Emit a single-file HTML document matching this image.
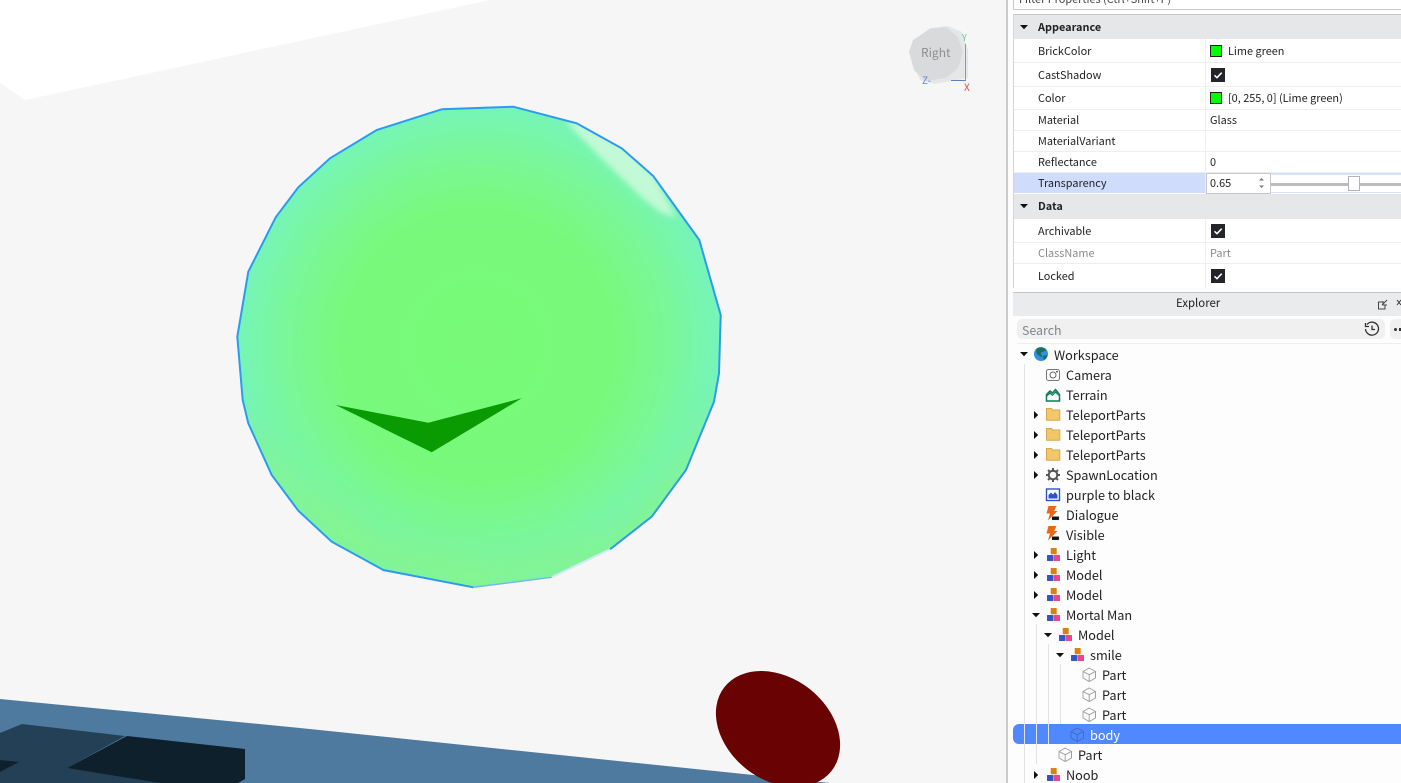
<!DOCTYPE html>
<html><head><meta charset="utf-8"><style>
html,body{margin:0;padding:0;width:1401px;height:783px;overflow:hidden;background:#fff}
body{position:relative;font-family:"Noto Sans CJK JP","Liberation Sans",sans-serif;color:#1e1e1e}
.a{position:absolute;white-space:nowrap}
.t{position:absolute;white-space:nowrap;font-size:10.9px;line-height:16px;color:#222}
.e{position:absolute;white-space:nowrap;font-size:12.7px;line-height:20px;color:#222}
.h{position:absolute;left:1014px;width:387px;background:#e6e7e8}
.l{position:absolute;left:1014px;width:387px;height:1px;background:#eeeeef}
.cb{position:absolute;left:1211px;width:14px;height:14px;background:#23252b}
.sw{position:absolute;left:1210px;width:10px;height:10px;background:#00ff00;border:1px solid #222}
svg.i{position:absolute;width:16px;height:16px;overflow:visible}
.g{position:absolute;width:1px;background:#e2e2e2}
</style></head><body>
<svg class="a" style="left:0;top:0" width="1007" height="783" viewBox="0 0 1007 783">
<defs>
<radialGradient id="gl" gradientUnits="userSpaceOnUse" cx="478" cy="345" r="245">
<stop offset="0" stop-color="#78fa78"/><stop offset=".55" stop-color="#79f97b"/><stop offset=".78" stop-color="#7af798"/><stop offset="1" stop-color="#76f4bc"/>
</radialGradient>
<clipPath id="cp"><polygon points="513.3,106.7 576.7,123.3 621.7,148.3 653.3,176 699.3,240 720.7,315 719,373.3 714,401.7 686,470 651.7,516.7 610,549.3 551.7,577.3 473.3,587.3 383.3,570 331.7,541.7 298.3,510.7 271.7,475 248.3,423.3 242.7,400 237.3,336.7 248.3,271.7 275.7,217.3 298.3,187.3 330,158.3 376.7,130 441.7,109.3"/></clipPath>
<filter id="bl" x="-30%" y="-30%" width="160%" height="160%"><feGaussianBlur stdDeviation="3"/></filter>
<filter id="bl2" x="-30%" y="-30%" width="160%" height="160%"><feGaussianBlur stdDeviation="14"/></filter>
</defs>
<rect width="1007" height="783" fill="#f6f6f6"/>
<polygon points="0,0 490,0 25,100 0,83" fill="#ffffff"/>
<polygon points="0,699 300,728 830,783 0,783" fill="#4d7a9e"/>
<polygon points="125,736 22,724 0,733 0,783 170,783 67,768" fill="#244057"/>
<polygon points="0,760 19,762 0,772" fill="#0f202c"/>
<polygon points="67,768 127,736 245,749 245,779 238,783 160,783" fill="#0e202b"/>
<ellipse cx="778" cy="729" rx="68" ry="51" transform="rotate(38 778 729)" fill="#680203"/>
<polygon points="513.3,106.7 576.7,123.3 621.7,148.3 653.3,176 699.3,240 720.7,315 719,373.3 714,401.7 686,470 651.7,516.7 610,549.3 551.7,577.3 473.3,587.3 383.3,570 331.7,541.7 298.3,510.7 271.7,475 248.3,423.3 242.7,400 237.3,336.7 248.3,271.7 275.7,217.3 298.3,187.3 330,158.3 376.7,130 441.7,109.3" fill="url(#gl)"/>
<g clip-path="url(#cp)">
<polygon points="640,560 473,600 340,560 260,480 240,410 300,480 390,540 500,560 620,530 690,450 720,400 720,480" fill="#88f488" opacity=".85" filter="url(#bl2)"/>
<polygon points="566,122 580,122 625,148 655,176 676,218 660,212 640,196 603,160" fill="#c2f9d6" filter="url(#bl)"/>
</g>
<polyline points="441.7,109.3 513.3,106.7 576.7,123.3 621.7,148.3 653.3,176 699.3,240 720.7,315 719,373.3 714,401.7 686,470 651.7,516.7 610,549.3" fill="none" stroke="#2b9af0" stroke-width="2"/>
<polyline points="610,549.3 551.7,577.3" fill="none" stroke="#d6e8f6" stroke-width="2"/>
<polyline points="551.7,577.3 473.3,587.3" fill="none" stroke="#6db9ef" stroke-width="1.4"/>
<polyline points="473.3,587.3 383.3,570 331.7,541.7 298.3,510.7 271.7,475 248.3,423.3 242.7,400 237.3,336.7 248.3,271.7 275.7,217.3 298.3,187.3 330,158.3 376.7,130 441.7,109.3" fill="none" stroke="#2b9af0" stroke-width="2"/>
<polygon points="335.7,405 428.3,422.7 521.7,398.3 431.7,452.3" fill="#0a9a02"/>
<polygon points="910,55 914,40 930,28 948,26 962,32 968,50 968,78 935,84 920,80" fill="#e4e6e7"/>
<polygon points="909,52 913,40 930,29 946,27 958,37 963,52 958,68 946,78 925,81 914,70" fill="#d9dadb"/>
<text x="921" y="57" font-size="12" fill="#8d8d8d" font-family="'Noto Sans CJK JP',sans-serif">Right</text>
<line x1="965.500" y1="44" x2="965.500" y2="80" stroke="#55c07a" stroke-width="1"/>
<line x1="951" y1="80.500" x2="966" y2="80.500" stroke="#5a80cc" stroke-width="1"/>
<text x="962" y="41" font-size="9" fill="#6ac88a" font-family="'Noto Sans CJK JP',sans-serif">Y</text>
<text x="922" y="84" font-size="10" fill="#5f86d4" font-family="'Noto Sans CJK JP',sans-serif">Z-</text>
<text x="964" y="91" font-size="10" fill="#dc5050" font-family="'Noto Sans CJK JP',sans-serif">X</text>
</svg>

<svg width="0" height="0" style="position:absolute"><defs>
<symbol id="model" viewBox="0 0 16 16"><rect x="4.700" y="1" width="6" height="6.300" rx=".5" fill="#d9820f"/><rect x="1" y="8" width="6.300" height="6" rx=".5" fill="#3455c4"/><rect x="7.700" y="8" width="6.300" height="6" rx=".5" fill="#ea4590"/></symbol>
<symbol id="part" viewBox="0 0 16 16"><path d="M8.200 1 14.500 4.500V11L8.200 14.500 2 11V4.500ZM2.200 4.600 8.200 7.700 14.300 4.600M8.200 7.700V14.300" fill="none" stroke="#a2a2a2" stroke-width="1"/></symbol>
<symbol id="folder" viewBox="0 0 16 16"><path d="M1.500 1.500H6.500L7.500 3H14.800V13.300H1.500Z" fill="#f0c86a" stroke="#d8a84a" stroke-width="1"/></symbol>
<symbol id="bolt" viewBox="0 0 16 16"><path d="M3.500 1H11.500L9 6H12.500L3 15.500 5 8.500H1.500Z" fill="#ee6410"/><rect x="6.700" y="11.300" width="7.500" height="3.900" rx=".6" fill="#111" stroke="#fff" stroke-width=".5"/></symbol>
<symbol id="arR" viewBox="0 0 8 8"><path d="M2 0 6.200 4 2 8Z" fill="#111"/></symbol>
<symbol id="arD" viewBox="0 0 8 8"><path d="M0 2H8L4 6.200Z" fill="#111"/></symbol>
<symbol id="chk" viewBox="0 0 14 14"><path d="M3.500 7.300 6 9.700 10.700 4.700" fill="none" stroke="#fff" stroke-width="1.500"/></symbol>
</defs></svg>

<!-- divider -->
<div class="a" style="left:1006px;top:0;width:2px;height:783px;background:#c9cbce"></div>
<div class="a" style="left:1008px;top:0;width:393px;height:783px;background:#fdfdfd"></div>

<!-- filter -->
<div class="a" style="left:1013px;top:-6px;width:388px;height:15px;background:#fff;border:1px solid #c9c9c9;border-top:0;box-sizing:content-box"></div>
<div class="t" style="left:1019px;top:-9px;color:#444">Filter Properties (Ctrl+Shift+P)</div>

<!-- properties -->
<div class="a" style="left:1013px;top:14px;width:388px;height:1px;background:#c4c6c9"></div>
<div class="a" style="left:1013px;top:14px;width:1px;height:274px;background:#d4d6d9"></div>
<div class="a" style="left:1014px;top:15px;width:387px;height:273px;background:#fff"></div>
<div class="a" style="left:1205px;top:39px;width:1px;height:249px;background:#eeeeef"></div>
<div class="h" style="top:15px;height:24px"></div>
<div class="h" style="top:194px;height:25px"></div>
<svg class="a" style="left:1020px;top:23px" width="8" height="8"><use href="#arD"/></svg>
<svg class="a" style="left:1020px;top:202px" width="8" height="8"><use href="#arD"/></svg>
<div class="t" style="left:1038px;top:19px;font-weight:700">Appearance</div>
<div class="t" style="left:1038px;top:198px;font-weight:700">Data</div>

<div class="l" style="top:62px"></div><div class="l" style="top:86px"></div><div class="l" style="top:109px"></div><div class="l" style="top:130px"></div><div class="l" style="top:151px"></div><div class="l" style="top:172px"></div><div class="l" style="top:242px"></div><div class="l" style="top:263px"></div>

<div class="t" style="left:1038px;top:43px">BrickColor</div>
<div class="sw" style="top:45px"></div><div class="t" style="left:1228px;top:43px">Lime green</div>
<div class="t" style="left:1038px;top:67px">CastShadow</div>
<div class="cb" style="top:68px"><svg width="14" height="14" style="display:block"><use href="#chk"/></svg></div>
<div class="t" style="left:1038px;top:90px">Color</div>
<div class="sw" style="top:92px"></div><div class="t" style="left:1228px;top:90px">[0, 255, 0] (Lime green)</div>
<div class="t" style="left:1038px;top:112px">Material</div><div class="t" style="left:1210px;top:112px">Glass</div>
<div class="t" style="left:1038px;top:133px">MaterialVariant</div>
<div class="t" style="left:1038px;top:154px">Reflectance</div><div class="t" style="left:1210px;top:154px">0</div>

<div class="a" style="left:1014px;top:173px;width:191px;height:20px;background:#cfdcfb"></div>
<div class="a" style="left:1271px;top:173px;width:130px;height:2px;background:#d8e2fa"></div>
<div class="a" style="left:1271px;top:192px;width:130px;height:1px;background:#d8e2fa"></div>
<div class="t" style="left:1038px;top:175px">Transparency</div>
<div class="a" style="left:1206px;top:173px;width:63px;height:19px;background:#fff;border:1px solid #c4c6c9"></div>
<div class="t" style="left:1210px;top:175px">0.65</div>
<svg class="a" style="left:1258px;top:176px" width="7" height="14"><path d="M1 4.500 3.500 2 6 4.500ZM1 9.500H6L3.500 12Z" fill="#777"/></svg>
<div class="a" style="left:1271px;top:183px;width:130px;height:3px;background:#bcbcbf"></div>
<div class="a" style="left:1348px;top:176px;width:10px;height:13px;background:#fff;border:1px solid #b4b4b8"></div>

<div class="t" style="left:1038px;top:223px">Archivable</div>
<div class="cb" style="top:224px"><svg width="14" height="14" style="display:block"><use href="#chk"/></svg></div>
<div class="t" style="left:1038px;top:245px;color:#8a8a8a">ClassName</div><div class="t" style="left:1210px;top:245px;color:#8a8a8a">Part</div>
<div class="t" style="left:1038px;top:268px">Locked</div>
<div class="cb" style="top:269px"><svg width="14" height="14" style="display:block"><use href="#chk"/></svg></div>

<!-- explorer header -->
<div class="a" style="left:1013px;top:292px;width:388px;height:23px;background:#eaebec;border-top:1px solid #c4c6c9"></div>
<div class="t" style="left:1176px;top:295px;font-size:11.4px">Explorer</div>
<svg class="a" style="left:1377px;top:298px" width="24" height="12"><path d="M5.500 4H1.500V11H8V7.500M5 7 10 2M6 3V7H10" fill="none" stroke="#444" stroke-width="1"/><path d="M20 2 24 7M24 2 20 7" fill="none" stroke="#333" stroke-width="1"/></svg>

<!-- search -->
<div class="a" style="left:1017px;top:319px;width:368px;height:20px;background:#f0f0f1;border-radius:5px"></div>
<div class="a" style="left:1390px;top:319px;width:11px;height:20px;background:#f0f0f1;border-radius:5px 0 0 5px"></div>
<div class="a" style="left:1017px;top:343px;width:384px;height:1px;background:#eeeeef"></div>
<div class="a" style="left:1022px;top:321px;font-size:12.4px;line-height:18px;color:#80858a">Search</div>
<svg class="a" style="left:1364px;top:321px" width="16" height="16"><path d="M3 3.500A6.500 6.500 0 1 1 1.500 8M1.500 2V5.500H5M8 4.500V8.500H11" fill="none" stroke="#333" stroke-width="1.300"/></svg>
<div class="a" style="left:1394px;top:328px;width:3px;height:3px;border-radius:50%;background:#333"></div>
<div class="a" style="left:1399px;top:328px;width:2px;height:3px;background:#333"></div>

<!-- selected -->
<div class="a" style="left:1013px;top:724px;width:388px;height:20px;background:#5088ff;border-radius:6px 0 0 6px"></div>

<!-- guides -->
<div class="g" style="left:1024px;top:364px;height:419px"></div>
<div class="g" style="left:1036px;top:624px;height:140px"></div>
<div class="g" style="left:1048px;top:644px;height:100px"></div>
<div class="g" style="left:1060px;top:664px;height:60px"></div>

<!-- tree -->
<svg class="a" style="left:1020px;top:350px" width="8" height="8"><use href="#arD"/></svg>
<svg class="i" style="left:1033px;top:346px" viewBox="0 0 16 16"><circle cx="8" cy="8" r="7" fill="#2f8fe0"/><path d="M4 2.500C7 1 11 1.500 13 4 12 6 9 5 8 7 7 9 10 9 9 11 7 11 5 9 3.500 7 3 5 3 4 4 2.500Z" fill="#1f6e58"/><path d="M10 10 14 9C14 12 12 13 10.500 14Z" fill="#1f6e58"/></svg>
<div class="e" style="left:1054px;top:345px">Workspace</div>

<svg class="i" style="left:1045px;top:367px" viewBox="0 0 16 16"><rect x="1.500" y="2.500" width="13" height="11" rx="2" fill="none" stroke="#777"/><circle cx="8" cy="8" r="3" fill="none" stroke="#666"/><rect x="11" y="4" width="2" height="1.500" fill="#666"/></svg>
<div class="e" style="left:1066px;top:365px">Camera</div>

<svg class="i" style="left:1045px;top:387px" viewBox="0 0 16 16"><path d="M1.500 14V7.500L5 4 7.500 6 10.500 2.500 14.500 7.500V14Z" fill="#fff" stroke="#0d7c52" stroke-width="1.500"/><path d="M2 8 5 5 7.500 7.500 10.500 4 14 8 14 9 10.500 6 7.500 9 5 7 2 9.500Z" fill="#0d7c52"/></svg>
<div class="e" style="left:1066px;top:385px">Terrain</div>

<svg class="a" style="left:1032px;top:411px" width="8" height="8"><use href="#arR"/></svg>
<svg class="i" style="left:1045px;top:407px"><use href="#folder"/></svg>
<div class="e" style="left:1066px;top:405px">TeleportParts</div>
<svg class="a" style="left:1032px;top:431px" width="8" height="8"><use href="#arR"/></svg>
<svg class="i" style="left:1045px;top:427px"><use href="#folder"/></svg>
<div class="e" style="left:1066px;top:425px">TeleportParts</div>
<svg class="a" style="left:1032px;top:451px" width="8" height="8"><use href="#arR"/></svg>
<svg class="i" style="left:1045px;top:447px"><use href="#folder"/></svg>
<div class="e" style="left:1066px;top:445px">TeleportParts</div>

<svg class="a" style="left:1032px;top:471px" width="8" height="8"><use href="#arR"/></svg>
<svg class="i" style="left:1045px;top:467px" viewBox="0 0 16 16"><circle cx="8" cy="8" r="4.300" fill="#fff" stroke="#555" stroke-width="2"/><path d="M8 1V3.500M8 12.500V15M1 8H3.500M12.500 8H15M3 3 4.800 4.800M11.200 11.200 13 13M13 3 11.200 4.800M4.800 11.200 3 13" stroke="#555" stroke-width="2"/></svg>
<div class="e" style="left:1066px;top:465px">SpawnLocation</div>

<svg class="i" style="left:1045px;top:487px" viewBox="0 0 16 16"><rect x="1.500" y="2" width="13" height="11.500" fill="#fff" stroke="#2a54c8" stroke-width="1.400"/><path d="M3.500 11.500V8L6 5.500 8 7.500 10 5 12.500 8V11.500Z" fill="#2a54c8"/></svg>
<div class="e" style="left:1066px;top:485px">purple to black</div>

<svg class="i" style="left:1045px;top:505px"><use href="#bolt"/></svg>
<div class="e" style="left:1066px;top:505px">Dialogue</div>
<svg class="i" style="left:1045px;top:525px"><use href="#bolt"/></svg>
<div class="e" style="left:1066px;top:525px">Visible</div>

<svg class="a" style="left:1032px;top:551px" width="8" height="8"><use href="#arR"/></svg>
<svg class="i" style="left:1046px;top:547px"><use href="#model"/></svg>
<div class="e" style="left:1066px;top:545px">Light</div>
<svg class="a" style="left:1032px;top:571px" width="8" height="8"><use href="#arR"/></svg>
<svg class="i" style="left:1046px;top:567px"><use href="#model"/></svg>
<div class="e" style="left:1066px;top:565px">Model</div>
<svg class="a" style="left:1032px;top:591px" width="8" height="8"><use href="#arR"/></svg>
<svg class="i" style="left:1046px;top:587px"><use href="#model"/></svg>
<div class="e" style="left:1066px;top:585px">Model</div>
<svg class="a" style="left:1032px;top:611px" width="8" height="8"><use href="#arD"/></svg>
<svg class="i" style="left:1046px;top:607px"><use href="#model"/></svg>
<div class="e" style="left:1066px;top:605px">Mortal Man</div>

<svg class="a" style="left:1044px;top:631px" width="8" height="8"><use href="#arD"/></svg>
<svg class="i" style="left:1058px;top:627px"><use href="#model"/></svg>
<div class="e" style="left:1078px;top:625px">Model</div>

<svg class="a" style="left:1056px;top:651px" width="8" height="8"><use href="#arD"/></svg>
<svg class="i" style="left:1070px;top:647px"><use href="#model"/></svg>
<div class="e" style="left:1090px;top:645px">smile</div>

<svg class="i" style="left:1081px;top:667px"><use href="#part"/></svg>
<div class="e" style="left:1102px;top:665px">Part</div>
<svg class="i" style="left:1081px;top:687px"><use href="#part"/></svg>
<div class="e" style="left:1102px;top:685px">Part</div>
<svg class="i" style="left:1081px;top:707px"><use href="#part"/></svg>
<div class="e" style="left:1102px;top:705px">Part</div>

<svg class="i" style="left:1069px;top:727px" viewBox="0 0 16 16"><path d="M8.200 1 14.500 4.500V11L8.200 14.500 2 11V4.500ZM2.200 4.600 8.200 7.700 14.300 4.600M8.200 7.700V14.300" fill="none" stroke="#4a6cbd" stroke-width="1"/></svg>
<div class="e" style="left:1090px;top:725px;color:#fff">body</div>

<svg class="i" style="left:1057px;top:747px"><use href="#part"/></svg>
<div class="e" style="left:1078px;top:745px">Part</div>

<svg class="a" style="left:1032px;top:771px" width="8" height="8"><use href="#arR"/></svg>
<svg class="i" style="left:1046px;top:767px"><use href="#model"/></svg>
<div class="e" style="left:1066px;top:765px">Noob</div>
</body></html>
